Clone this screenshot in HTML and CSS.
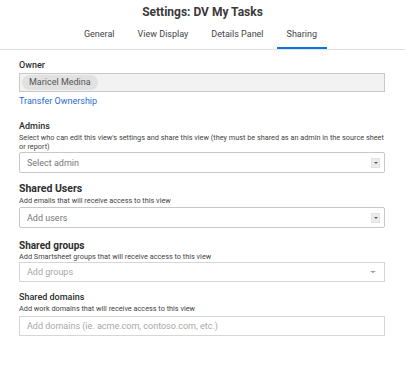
FILE: index.html
```html
<!DOCTYPE html>
<html lang="en">
<head>
    <meta charset="UTF-8">
    <meta name="viewport" content="width=device-width, initial-scale=1.0">
    <title>Settings: DV My Tasks</title>
    <link rel="stylesheet" href="styles.css">
</head>
<body>
    <div class="cabecalho">
        <h1 class="titulo">Settings: DV My Tasks</h1>
        <div class="abas">
            <span class="aba">General</span>
            <span class="aba">View Display</span>
            <span class="aba">Details Panel</span>
            <span class="aba ativa">Sharing</span>
        </div>
    </div>

    <div class="conteudo">
        <div class="campo campo-dono">
            <p class="rotulo">Owner</p>
            <div class="caixa caixa-dono">
                <span class="chip">Maricel Medina</span>
            </div>
            <a class="link" href="#">Transfer Ownership</a>
        </div>

        <div class="campo campo-admins">
            <p class="rotulo">Admins</p>
            <p class="descricao">Select who can edit this view's settings and share this view (they must be shared as an admin in the source sheet or report)</p>
            <div class="caixa">
                <span class="placeholder">Select admin</span>
                <span class="seta-caixa"><span class="seta"></span></span>
            </div>
        </div>

        <div class="campo campo-usuarios">
            <p class="rotulo rotulo-grande">Shared Users</p>
            <p class="descricao">Add emails that will receive access to this view</p>
            <div class="caixa">
                <span class="placeholder">Add users</span>
                <span class="seta-caixa"><span class="seta"></span></span>
            </div>
        </div>

        <div class="campo campo-grupos">
            <p class="rotulo rotulo-medio">Shared groups</p>
            <p class="descricao">Add Smartsheet groups that will receive access to this view</p>
            <div class="caixa caixa-clara">
                <span class="placeholder claro">Add groups</span>
                <span class="seta seta-solta"></span>
            </div>
        </div>

        <div class="campo campo-dominios">
            <p class="rotulo">Shared domains</p>
            <p class="descricao">Add work domains that will receive access to this view</p>
            <div class="caixa caixa-clara caixa-dominios">
                <span class="placeholder claro">Add domains (ie. acme.com, contoso.com, etc.)</span>
            </div>
        </div>
    </div>
</body>
</html>
```

FILE: styles.css
```css
* {
    margin: 0;
    padding: 0;
    box-sizing: border-box;
}
body {
    font-family: Roboto, "Liberation Sans", sans-serif;
    color: #333;
    background-color: white;
}
.cabecalho {
    border-bottom: 1px solid #e2e2e2;
    text-align: center;
    height: 50px;
}
.titulo {
    font-size: 12px;
    font-weight: bold;
    color: #3a3a3a;
    padding-top: 5px;
    line-height: 14px;
}
.abas {
    display: flex;
    justify-content: center;
    gap: 3px;
    margin-top: 4px;
    margin-right: 4px;
}
.aba {
    font-size: 9px;
    line-height: 11px;
    color: #444;
    padding: 6px 10px 7px;
    border-bottom: 2px solid transparent;
}
.aba.ativa {
    border-bottom-color: #0a74e0;
}
.conteudo {
    padding: 9px 20px 0 19px;
}
.rotulo {
    font-size: 9px;
    font-weight: 500;
    color: #2e2e2e;
    line-height: 12px;
}
.rotulo-grande {
    font-size: 10.5px;
    font-weight: bold;
    line-height: 13px;
}
.rotulo-medio {
    font-size: 10px;
    font-weight: bold;
    line-height: 13px;
}
.descricao {
    font-size: 7.3px;
    color: #444;
    line-height: 9px;
    margin-top: 1px;
}
.campo-admins {
    margin-top: 13px;
}
.campo-usuarios {
    margin-top: 9px;
}
.campo-grupos {
    margin-top: 11px;
}
.campo-grupos .descricao {
    margin-top: 0;
}
.campo-dominios {
    margin-top: 9px;
}
.caixa {
    display: flex;
    align-items: center;
    justify-content: space-between;
    height: 21px;
    border: 1px solid #c8c8c8;
    border-radius: 2px;
    padding: 0 4px 0 7px;
    margin-top: 1px;
}
.campo-usuarios .caixa {
    margin-top: 2px;
}
.caixa-dono {
    height: 19px;
    background-color: #f2f2f2;
    border-radius: 0;
    padding-left: 2px;
    margin-top: 2px;
}
.caixa-clara {
    border-color: #d6d6d6;
    border-radius: 0;
    height: 20px;
    padding-right: 8px;
}
.caixa-dominios {
    margin-top: 3px;
}
.chip {
    font-size: 9px;
    color: #555;
    background-color: #e1e1e1;
    border-radius: 8px;
    padding: 0 7px;
    line-height: 15px;
}
.link {
    display: block;
    font-size: 9px;
    line-height: 12px;
    color: #2c6bd5;
    text-decoration: none;
    margin-top: 3px;
}
.placeholder {
    font-size: 9px;
    color: #777;
}
.placeholder.claro {
    color: #a8a8a8;
}
.seta-caixa {
    width: 9px;
    height: 10px;
    background-color: #ececec;
    border: 1px solid #e2e2e2;
    display: flex;
    align-items: center;
    justify-content: center;
}
.seta {
    width: 0;
    height: 0;
    border-left: 2px solid transparent;
    border-right: 2px solid transparent;
    border-top: 2px solid #555;
}
.seta-solta {
    border-left-width: 3px;
    border-right-width: 3px;
    border-top-color: #999;
}
```
